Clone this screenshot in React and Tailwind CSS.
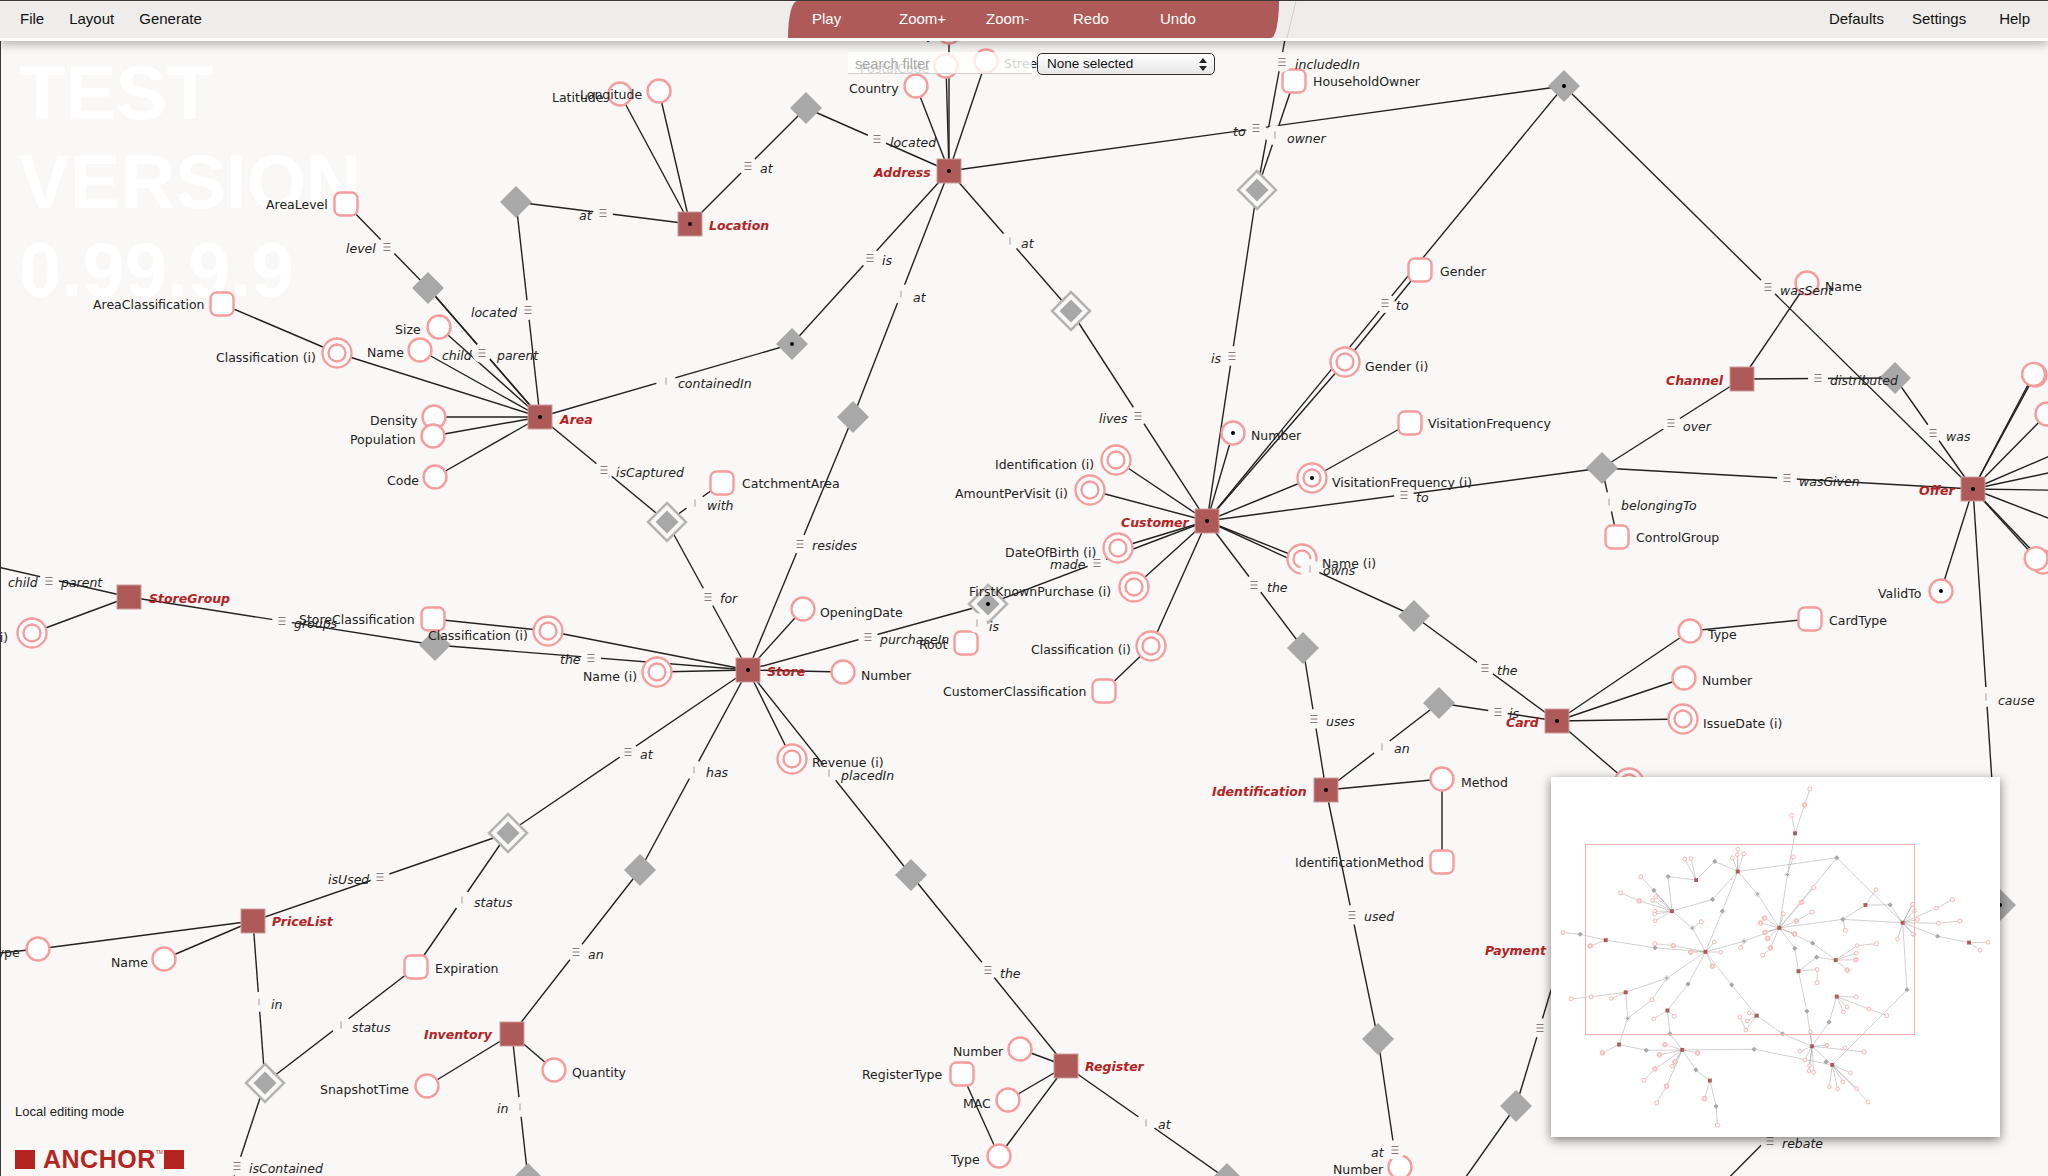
import React from 'react';

// minimap crop coords -> graph coords, for things outside the main viewport
const m = (x, y) => [x * 2.5666 - 1149, y * 2.07 - 524];

// id, kind, x, y, dot
const nodes = [
  ['address', 'anchor', 949, 171, true], ['location', 'anchor', 690, 224, true], ['area', 'anchor', 540, 417, true],
  ['storeGroup', 'anchor', 129, 597], ['store', 'anchor', 748, 670, true], ['customer', 'anchor', 1207, 521, true],
  ['channel', 'anchor', 1742, 379], ['offer', 'anchor', 1973, 489, true], ['card', 'anchor', 1557, 721, true],
  ['identification', 'anchor', 1326, 790, true], ['priceList', 'anchor', 253, 921], ['inventory', 'anchor', 512, 1034],
  ['register', 'anchor', 1066, 1066], ['payment', 'anchor', ...m(1057, 711)],

  ['d1', 'tie', 806, 108], ['d2', 'tie', 516, 202], ['d3', 'tie', 428, 288], ['d4', 'tie', 792, 344, true],
  ['d5', 'tie', 853, 417], ['d6', 'tie', 1895, 378], ['d7', 'tie', 1564, 86, true], ['d8', 'tie', 1602, 468],
  ['d9', 'tie', 1414, 616], ['d10', 'tie', 1303, 648], ['d11', 'tie', 1439, 703], ['d12', 'tie', 435, 645],
  ['d13', 'tie', 640, 870], ['d14', 'tie', 911, 875], ['d15', 'tie', 1378, 1039], ['d16', 'tie', 1516, 1106],
  ['d17', 'tie', 528, 1179], ['d18', 'tie', 1227, 1179], ['d19', 'tie', 2000, 905, true],

  ['dd1', 'hist', 1071, 311], ['dd2', 'hist', 1257, 190], ['dd3', 'hist', 667, 522], ['dd4', 'hist', 988, 604, true],
  ['dd5', 'hist', 508, 833], ['dd6', 'hist', 265, 1083],

  ['latitude', 'attr', 620, 94], ['longitude', 'attr', 659, 91], ['size', 'attr', 439, 327], ['areaName', 'attr', 420, 350],
  ['country', 'attr', 916, 86], ['city', 'attr', 949, 32], ['postalCode', 'attr', 946, 66], ['street', 'attr', 986, 61],
  ['wasName', 'attr', 1807, 283], ['offerA', 'attr', 2035, 375], ['offerB', 'attr', 2047, 414], ['offerC', 'attr', 2043, 562],
  ['density', 'attr', 434, 417], ['population', 'attr', 433, 436], ['code', 'attr', 435, 477],
  ['openingDate', 'attr', 803, 609], ['storeNumber', 'attr', 843, 672], ['custNumber', 'attr', 1233, 433, true],
  ['validTo', 'attr', 1941, 591, true], ['cardTypeAttr', 'attr', 1690, 631], ['cardNumber', 'attr', 1684, 678],
  ['method', 'attr', 1442, 779], ['lowNumber', 'attr', 1400, 1167], ['plType', 'attr', 38, 949], ['plName', 'attr', 164, 959],
  ['snapshot', 'attr', 427, 1086], ['quantity', 'attr', 554, 1070], ['regNumber', 'attr', 1020, 1049],
  ['mac', 'attr', 1008, 1100], ['regType', 'attr', 999, 1156],

  ['areaClassI', 'attri', 337, 353], ['genderI', 'attri', 1345, 362], ['storeClassI', 'attri', 548, 631],
  ['storeNameI', 'attri', 657, 672], ['sgNameI', 'attri', 32, 633], ['revenue', 'attri', 792, 759],
  ['identI', 'attri', 1116, 460], ['amount', 'attri', 1090, 490], ['dob', 'attri', 1118, 548], ['first', 'attri', 1134, 587],
  ['custClassI', 'attri', 1151, 646], ['visitI', 'attri', 1312, 478, true], ['custNameI', 'attri', 1302, 559],
  ['issue', 'attri', 1683, 719], ['cardLow', 'attri', 1629, 783],

  ['areaLevel', 'knot', 346, 204], ['areaClass', 'knot', 222, 304], ['household', 'knot', 1294, 81], ['gender', 'knot', 1420, 270],
  ['catchment', 'knot', 722, 483], ['storeClass', 'knot', 433, 619], ['root', 'knot', 966, 643], ['custClass', 'knot', 1104, 691],
  ['visit', 'knot', 1410, 423], ['control', 'knot', 1617, 537], ['cardType', 'knot', 1810, 619], ['identMethod', 'knot', 1442, 862],
  ['expiration', 'knot', 416, 967], ['regTypeK', 'knot', 962, 1074],

  // off screen, only seen in the minimap
  ['topA', 'anchor', ...m(956, 221)], ['topK', 'knot', ...m(992, 88)], ['topI', 'attri', ...m(979, 136)], ['topC', 'attr', ...m(948, 168)],
  ['sgLeft', 'attr', ...m(394, 519)], ['sgD', 'tie', ...m(436, 524)], ['plLeft', 'knot', ...m(414, 718)],
  ['low1', 'anchor', ...m(530, 855)], ['low1I', 'attri', ...m(490, 880)], ['lowD1', 'tie', ...m(596, 872)],
  ['low2', 'anchor', ...m(683, 871)], ['low2a', 'attri', ...m(641, 855)], ['low2b', 'attri', ...m(628, 886)], ['low2c', 'attri', ...m(720, 880)],
  ['low2d', 'attri', ...m(665, 907)], ['low2e', 'attr', ...m(659, 920)], ['low2f', 'attri', ...m(617, 928)], ['low2g', 'knot', ...m(590, 962)],
  ['low2h', 'attri', ...m(645, 980)], ['low2i', 'knot', ...m(621, 1030)], ['lowD2', 'tie', ...m(716, 931)], ['low5', 'anchor', ...m(750, 963)],
  ['low5I', 'attri', ...m(737, 1017)], ['lowD3', 'tie', ...m(765, 1040)], ['low5K', 'knot', ...m(768, 1097)], ['lowD4', 'tie', ...m(857, 869)],
  ['low3', 'anchor', ...m(997, 860)], ['low3a', 'attr', ...m(1033, 857)], ['low3b', 'attr', ...m(1077, 865)], ['low3c', 'knot', ...m(1123, 877)],
  ['low3d', 'attr', ...m(968, 875)], ['low3e', 'attr', ...m(980, 901)], ['low3f', 'attr', ...m(991, 918)], ['low3g', 'attr', ...m(990, 934)],
  ['low3h', 'attr', ...m(1001, 938)], ['lowD5', 'tie', ...m(1031, 907)], ['low4', 'anchor', ...m(1046, 916)], ['low4a', 'attr', ...m(1090, 940)],
  ['low4b', 'attr', ...m(1072, 967)], ['low4c', 'attr', ...m(1059, 988)], ['low4d', 'attr', ...m(1039, 982)], ['low4e', 'attr', ...m(1105, 987)],
  ['low4f', 'knot', ...m(1133, 1027)], ['payA', 'attr', ...m(1104, 712)], ['payB', 'attr', ...m(1082, 742)], ['payC', 'attr', ...m(1073, 757)],
  ['payD', 'attr', ...m(1135, 748)], ['payE', 'knot', ...m(1178, 768)], ['offD', 'attr', ...m(1240, 434)], ['offE', 'attr', ...m(1252, 480)],
  ['offF', 'attr', ...m(1298, 446)], ['offG', 'knot', ...m(1337, 420)], ['offH', 'attr', ...m(1303, 491)], ['offI', 'knot', ...m(1355, 484)],
  ['offJ', 'attr', ...m(1241, 523)], ['offD1', 'tie', ...m(1301, 530)], ['offA', 'anchor', ...m(1377, 549)], ['offK', 'attr', ...m(1423, 548)],
  ['offL', 'attr', ...m(1404, 572)],
];

const pos = Object.fromEntries(nodes.map((n) => [n[0], [n[2], n[3]]]));

const edges = [
  'address-country', 'address-city', 'address-postalCode', 'address-street', 'address-d1', 'address-d7', 'address-d4', 'address-d5', 'address-dd1',
  'location-latitude', 'location-longitude', 'location-d1', 'location-d2', 'd2-area', 'areaLevel-d3', 'd3-area', 'size-area', 'areaName-area',
  'areaClassI-area', 'areaClass-areaClassI', 'density-area', 'population-area', 'code-area', 'area-d4', 'area-dd3', 'dd3-store', 'dd3-catchment',
  'd5-store', 'store-openingDate', 'store-storeNumber', 'store-revenue', 'store-storeNameI', 'store-storeClassI', 'storeClass-storeClassI',
  'store-dd4', 'store-d12', 'store-dd5', 'store-d13', 'store-d14', 'd12-storeGroup', 'storeGroup-sgNameI', 'storeGroup-sgD', 'sgD-sgLeft',
  'dd4-root', 'dd4-customer', 'customer-identI', 'customer-amount', 'customer-dob', 'customer-first', 'customer-custClassI', 'custClassI-custClass',
  'customer-custNumber', 'customer-visitI', 'visitI-visit', 'customer-dd1', 'customer-dd2', 'dd2-topA', 'dd2-household', 'topA-topC', 'topA-topI', 'topI-topK',
  'customer-d7', 'customer-genderI', 'genderI-gender', 'customer-d8', 'd8-control', 'd8-offer', 'd8-channel', 'customer-custNameI', 'customer-d9', 'customer-d10',
  'd10-identification', 'd9-card', 'card-cardTypeAttr', 'cardTypeAttr-cardType', 'card-cardNumber', 'card-issue', 'card-cardLow', 'card-d11', 'd11-identification',
  'identification-method', 'method-identMethod', 'identification-d15', 'd15-low3', 'low3-lowNumber', 'd7-offer', 'channel-wasName', 'channel-d6', 'd6-offer',
  'offer-validTo', 'offer-offerA', 'offer-offerB', 'offer-offerC', 'offer-d19', 'offer-offD', 'offer-offE', 'offer-offF', 'offF-offG', 'offer-offH', 'offH-offI', 'offer-offJ', 'offer-offD1', 'offD1-offA', 'offA-offK', 'offA-offL',
  'payment-d16', 'd16-low3', 'd19-low4', 'payment-payA', 'payment-payB', 'payment-payC', 'payment-payD', 'payD-payE', 'd18-register', 'd18-low3',
  'register-regNumber', 'register-mac', 'register-regType', 'regTypeK-regType', 'register-d14', 'priceList-plType', 'plType-plLeft', 'priceList-plName', 'priceList-dd5', 'priceList-dd6',
  'dd5-expiration', 'expiration-dd6', 'dd6-low1', 'inventory-d13', 'inventory-snapshot', 'inventory-quantity', 'inventory-d17', 'd17-low2',
  'low1-low1I', 'low1-lowD1', 'lowD1-low2', 'low2-low2a', 'low2-low2b', 'low2-low2c', 'low2-low2d', 'low2-low2e', 'low2-low2f', 'low2f-low2g', 'low2-low2h', 'low2h-low2i', 'low2-lowD2', 'lowD2-low5', 'low5-low5I', 'low5-lowD3', 'lowD3-low5K',
  'low2-lowD4', 'lowD4-low4', 'low3-low3a', 'low3-low3c', 'low3-low3d', 'low3-low3e', 'low3-low3f', 'low3-low3g', 'low3-low3h', 'low3-low4', 'low4-low4a', 'low4-low4b', 'low4-low4c', 'low4-low4d', 'low4-low4e', 'low4-low4f',
];

// x, y, bars
const grips = [
  [387, 247, 3], [528, 310, 3], [482, 353, 3], [603, 213, 3], [748, 166, 3], [877, 139, 3], [870, 258, 3], [901, 294, 1], [1010, 241, 1],
  [1256, 128, 3], [1275, 135, 1], [1282, 62, 3], [1232, 356, 3], [1385, 303, 3], [666, 381, 1], [1768, 287, 3], [1818, 378, 3], [604, 470, 3],
  [695, 503, 1], [708, 597, 3], [49, 581, 3], [282, 621, 3], [591, 658, 3], [628, 752, 3], [694, 770, 1], [800, 544, 3], [868, 637, 3], [977, 623, 1],
  [1097, 563, 3], [1138, 416, 3], [1310, 569, 1], [1254, 585, 3], [829, 773, 1], [1314, 719, 3], [1382, 747, 1], [1671, 423, 3], [1404, 495, 3],
  [1787, 478, 3], [1609, 502, 1], [1933, 433, 3], [1986, 697, 1], [1485, 668, 3], [1498, 712, 3], [380, 877, 3], [462, 900, 1], [576, 952, 3],
  [259, 1002, 1], [341, 1025, 1], [520, 1107, 1], [237, 1166, 3], [988, 970, 3], [1146, 1123, 1], [1352, 915, 3], [1395, 1150, 3], [1770, 1141, 3], [1540, 1028, 3],
];

// text, x, baseline
const attrLabels = [
  ['Latitude', 552, 102], ['Longitude', 580, 99], ['AreaLevel', 266, 209], ['AreaClassification', 93, 309], ['Size', 395, 334], ['Name', 367, 357],
  ['Classification (i)', 216, 362], ['Country', 849, 93], ['Street', 1004, 68], ['PostalCode', 860, 73], ['City', 909, 39], ['HouseholdOwner', 1313, 86],
  ['Gender', 1440, 276], ['Gender (i)', 1365, 371], ['Name', 1825, 291], ['Density', 370, 425], ['Population', 350, 444], ['Code', 387, 485],
  ['StoreClassification', 299, 624], ['Classification (i)', 428, 640], ['Name (i)', 583, 681], ['Name (i)', -46, 642], ['CatchmentArea', 742, 488],
  ['OpeningDate', 820, 617], ['Number', 861, 680], ['Revenue (i)', 812, 767], ['Root', 919, 649], ['Identification (i)', 995, 469], ['AmountPerVisit (i)', 955, 498],
  ['DateOfBirth (i)', 1005, 557], ['FirstKnownPurchase (i)', 969, 596], ['Classification (i)', 1031, 654], ['CustomerClassification', 943, 696], ['Number', 1251, 440],
  ['VisitationFrequency (i)', 1332, 487], ['VisitationFrequency', 1428, 428], ['Name (i)', 1322, 568], ['ControlGroup', 1636, 542], ['ValidTo', 1878, 598],
  ['CardType', 1829, 625], ['Type', 1708, 639], ['Number', 1702, 685], ['IssueDate (i)', 1703, 728], ['Method', 1461, 787], ['IdentificationMethod', 1295, 867],
  ['Number', 1333, 1174], ['Type', -9, 957], ['Name', 111, 967], ['Expiration', 435, 973], ['SnapshotTime', 320, 1094], ['Quantity', 572, 1077],
  ['Number', 953, 1056], ['RegisterType', 862, 1079], ['MAC', 963, 1108], ['Type', 951, 1164],
];

const anchorLabels = [
  ['Address', 874, 177], ['Location', 709, 230], ['Area', 560, 424], ['StoreGroup', 149, 603], ['Store', 767, 676], ['Customer', 1121, 527], ['Channel', 1666, 385],
  ['Offer', 1919, 495], ['Card', 1506, 727], ['Identification', 1212, 796], ['PriceList', 272, 926], ['Inventory', 424, 1039], ['Register', 1085, 1071], ['Payment', 1485, 955],
];

const roleLabels = [
  ['level', 346, 253], ['located', 471, 317], ['child', 442, 360], ['parent', 497, 360], ['at', 579, 220], ['at', 760, 173], ['located', 890, 147], ['is', 882, 265],
  ['at', 913, 302], ['at', 1021, 248], ['to', 1233, 136], ['owner', 1287, 143], ['includedIn', 1295, 69], ['is', 1211, 363], ['to', 1396, 310], ['containedIn', 678, 388],
  ['wasSent', 1780, 295], ['distributed', 1830, 385], ['isCaptured', 616, 477], ['with', 707, 510], ['for', 720, 603], ['child', 8, 587], ['parent', 61, 587],
  ['groups', 294, 628], ['the', 560, 664], ['at', 640, 759], ['has', 706, 777], ['resides', 812, 550], ['purchaseIn', 880, 644], ['is', 989, 631], ['made', 1050, 569],
  ['lives', 1099, 423], ['owns', 1323, 575], ['the', 1267, 592], ['placedIn', 841, 780], ['uses', 1326, 726], ['an', 1394, 753], ['over', 1683, 431], ['to', 1416, 502],
  ['wasGiven', 1799, 486], ['belongingTo', 1621, 510], ['was', 1946, 441], ['cause', 1998, 705], ['the', 1497, 675], ['is', 1509, 718], ['isUsed', 328, 884], ['status', 474, 907],
  ['an', 588, 959], ['in', 271, 1009], ['status', 352, 1032], ['in', 497, 1113], ['isContained', 249, 1173], ['the', 1000, 978], ['at', 1158, 1129], ['used', 1364, 921],
  ['at', 1371, 1157], ['rebate', 1782, 1148],
];

const diamond = (x, y, r) => `${x},${y - r} ${x + r},${y} ${x},${y + r} ${x - r},${y}`;

const Node = ({ kind, x, y, dot, mini }) => {
  const ring = mini ? 'fill-white stroke-[#f6a5a5] stroke-[5]' : 'fill-white stroke-[#f79c9c] stroke-[2.4]';
  return (
    <g>
      {kind === 'anchor' && <rect x={x - 12} y={y - 12} width="24" height="24" className="fill-[#ad5a58] stroke-[#cf9c9a] stroke-1" />}
      {kind === 'tie' && <polygon points={diamond(x, y, 16)} className="fill-[#a8a8a8]" />}
      {kind === 'hist' && (
        <>
          <polygon points={diamond(x, y, 19)} className="fill-[#f9f8f6] stroke-[#b4b4b4] stroke-[2.5]" />
          <polygon points={diamond(x, y, 11.5)} className="fill-[#a8a8a8]" />
        </>
      )}
      {kind === 'attr' && <circle cx={x} cy={y} r="11.5" className={ring} />}
      {kind === 'attri' && (
        <>
          <circle cx={x} cy={y} r="14.5" className={ring} />
          <circle cx={x} cy={y} r="8.5" className={ring} />
        </>
      )}
      {kind === 'knot' && <rect x={x - 11.5} y={y - 11.5} width="23" height="23" rx="6" className={ring} />}
      {dot && !mini && <circle cx={x} cy={y} r="2" className="fill-black" />}
    </g>
  );
};

const Grip = ({ x, y, bars }) => (
  <g>
    <circle cx={x} cy={y} r="10" className="fill-[#f9f8f6]" />
    {bars === 3 ? (
      <g className="stroke-[#8a7a7c] stroke-1">
        <line x1={x - 3.5} x2={x + 3.5} y1={y - 3.5} y2={y - 3.5} />
        <line x1={x - 3.5} x2={x + 3.5} y1={y} y2={y} />
        <line x1={x - 3.5} x2={x + 3.5} y1={y + 3.5} y2={y + 3.5} />
      </g>
    ) : (
      <line x1={x} x2={x} y1={y - 3.5} y2={y + 3.5} className="stroke-[#a89a9c] stroke-1" />
    )}
  </g>
);

const Graph = ({ mini = false }) => (
  <g>
    <g className={mini ? 'stroke-[#909090] stroke-[2.6]' : 'stroke-[#222] stroke-[1.4]'}>
      {edges.map((e) => {
        const [a, b] = e.split('-');
        return <line key={e} x1={pos[a][0]} y1={pos[a][1]} x2={pos[b][0]} y2={pos[b][1]} />;
      })}
      <line x1={430} y1={290} x2={542} y2={419} />
    </g>
    {nodes.map((n) => (
      <Node key={n[0]} kind={n[1]} x={n[2]} y={n[3]} dot={n[4]} mini={mini} />
    ))}
    {!mini && grips.map((g, i) => <Grip key={i} x={g[0]} y={g[1]} bars={g[2]} />)}
    {!mini && (
      <g className="font-['DejaVu_Sans',sans-serif] text-[12.5px]">
        {attrLabels.map(([t, x, y], i) => (
          <text key={i} x={x} y={y} className="fill-[#222]">{t}</text>
        ))}
        {roleLabels.map(([t, x, y], i) => (
          <text key={i} x={x} y={y} className="fill-[#222] italic">{t}</text>
        ))}
        {anchorLabels.map(([t, x, y], i) => (
          <text key={i} x={x} y={y} className="fill-[#b5211f] font-bold italic">{t}</text>
        ))}
      </g>
    )}
  </g>
);

const Header = () => (
  <header className="relative z-20 flex h-[41px] border-t border-[#3a3a3a] border-b-[3px] border-b-white bg-[#eeedeb] text-[15px] text-[#111] shadow-[0_3px_10px_rgba(0,0,0,0.3)]">
    <nav className="flex w-[788px] items-center gap-[25px] pl-[20px]">
      <span>File</span>
      <span>Layout</span>
      <span>Generate</span>
    </nav>
    <nav className="flex w-[491px] items-center rounded-tl-[9px_36px] rounded-br-[8px_36px] bg-[#ad5a58] pl-[24px] text-white">
      <span className="w-[87px]">Play</span>
      <span className="w-[87px]">Zoom+</span>
      <span className="w-[87px]">Zoom-</span>
      <span className="w-[87px]">Redo</span>
      <span>Undo</span>
    </nav>
    <svg className="h-[37px] w-[18px] shrink-0" viewBox="0 0 18 37">
      <line x1="17" y1="0" x2="8" y2="37" stroke="#cfcfcf" />
    </svg>
    <nav className="flex flex-1 items-center justify-end pr-[18px]">
      <span>Defaults</span>
      <span className="ml-[28px]">Settings</span>
      <span className="ml-[33px]">Help</span>
    </nav>
  </header>
);

const Watermark = () => (
  <div className="absolute left-[19px] top-[49px] text-[76px] font-bold leading-[88.5px] text-white">
    <div>TEST</div>
    <div>VERSION</div>
    <div>0.99.9.9</div>
  </div>
);

const Filters = () => (
  <div className="absolute left-[848px] top-[52px] z-10 flex items-start gap-[5px]">
    <input
      readOnly
      placeholder="search filter"
      className="h-[22px] w-[184px] border-b border-[#cfcfcf] bg-white/80 pl-[7px] pt-[2px] text-[14.5px] outline-none placeholder:text-[#a9a9a9]"
    />
    <div className="mt-px flex h-[22px] w-[178px] items-center justify-between rounded-[5px] border border-[#333] bg-gradient-to-b from-white to-[#e6e6e6] pl-[9px] pr-[7px] text-[13.5px] text-[#111]">
      <span>None selected</span>
      <svg width="8" height="13" viewBox="0 0 8 13" className="fill-[#222]">
        <polygon points="4,0 8,5 0,5" />
        <polygon points="4,13 8,8 0,8" />
      </svg>
    </div>
  </div>
);

const Logo = () => (
  <div className="absolute bottom-[7px] left-[15px] z-10 flex flex-col gap-[31px]">
    <span className="text-[13px] leading-[15px] text-[#222]">Local editing mode</span>
    <div className="flex h-[19px] items-center">
      <div className="h-[19px] w-[20px] bg-[#b5251f]" />
      <span className="ml-[8px] text-[25px] font-bold leading-[19px] tracking-[0.5px] text-[#b5251f]">ANCHOR</span>
      <span className="mb-[14px] w-[8px] text-[5px] leading-[5px] text-[#b5251f]">TM</span>
      <div className="h-[19px] w-[20px] bg-[#b5251f]" />
    </div>
  </div>
);

const Minimap = () => (
  <div className="absolute left-[1551px] top-[777px] z-10 h-[360px] w-[449px] bg-white shadow-[0_3px_10px_rgba(0,0,0,0.5)]">
    <svg width="449" height="360" className="block">
      <g transform="translate(34 67) scale(0.161)">
        <Graph mini />
      </g>
      <rect x="34.5" y="67.5" width="329" height="190" fill="none" stroke="#f6b0ae" />
    </svg>
  </div>
);

export default function App() {
  return (
    <div className="relative h-[1176px] w-[2048px] overflow-hidden bg-[#f9f8f6] font-['Liberation_Sans',Arial,sans-serif] shadow-[inset_1px_0_0_#3a3a3a]">
      <Header />
      <Watermark />
      <svg width="2048" height="1176" className="absolute left-0 top-0">
        <Graph />
      </svg>
      <Filters />
      <Logo />
      <Minimap />
    </div>
  );
}
